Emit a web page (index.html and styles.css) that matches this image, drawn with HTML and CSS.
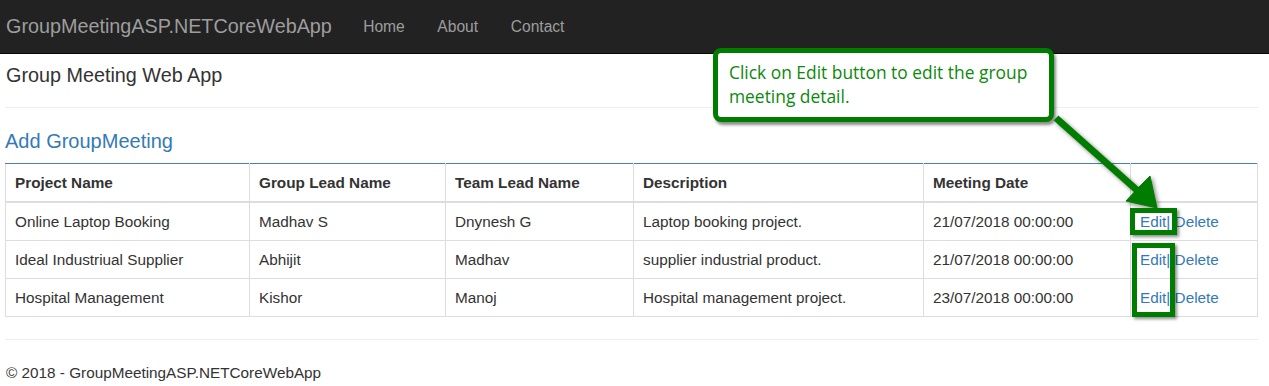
FILE: index.html
```html
<!DOCTYPE html>
<html>
<head>
<meta charset="utf-8">
<link rel="stylesheet" href="styles.css">
</head>
<body>
<nav class="navbar">
  <a class="brand">GroupMeetingASP.NETCoreWebApp</a>
  <ul class="nav">
    <li><a>Home</a></li>
    <li><a>About</a></li>
    <li><a>Contact</a></li>
  </ul>
</nav>
<main class="content">
  <div class="app-title">Group Meeting Web App</div>
  <hr class="rule">
  <h2 class="add-link">Add GroupMeeting</h2>
  <table class="grid">
    <thead>
      <tr>
        <th class="c1">Project Name</th>
        <th class="c2">Group Lead Name</th>
        <th class="c3">Team Lead Name</th>
        <th class="c4">Description</th>
        <th class="c5">Meeting Date</th>
        <th class="c6"></th>
      </tr>
    </thead>
    <tbody>
      <tr>
        <td>Online Laptop Booking</td>
        <td>Madhav S</td>
        <td>Dnynesh G</td>
        <td>Laptop booking project.</td>
        <td>21/07/2018 00:00:00</td>
        <td><a class="lnk">Edit|</a> <a class="lnk">Delete</a></td>
      </tr>
      <tr>
        <td>Ideal Industriual Supplier</td>
        <td>Abhijit</td>
        <td>Madhav</td>
        <td>supplier industrial product.</td>
        <td>21/07/2018 00:00:00</td>
        <td><a class="lnk">Edit|</a> <a class="lnk">Delete</a></td>
      </tr>
      <tr>
        <td>Hospital Management</td>
        <td>Kishor</td>
        <td>Manoj</td>
        <td>Hospital management project.</td>
        <td>23/07/2018 00:00:00</td>
        <td><a class="lnk">Edit|</a> <a class="lnk">Delete</a></td>
      </tr>
    </tbody>
  </table>
  <hr class="rule rule-bottom">
  <footer class="footer">© 2018 - GroupMeetingASP.NETCoreWebApp</footer>
</main>

<div class="callout">Click on Edit button to edit the group meeting detail.</div>
<svg class="arrow" width="130" height="120" viewBox="0 0 130 120">
  <g fill="#007d00" stroke="#007d00" style="filter: drop-shadow(2px 2px 2px rgba(0,0,0,.45))">
    <line x1="14" y1="12" x2="106" y2="94" stroke-width="7"/>
    <polygon points="96,82 108,70 115,102 84,95" stroke-width="1"/>
  </g>
</svg>
<div class="mark mark-1"></div>
<div class="mark mark-2"></div>
</body>
</html>
```

FILE: styles.css
```css
html, body {
  margin: 0;
  padding: 0;
}
body {
  position: relative;
  font-family: "Liberation Sans", Arial, Helvetica, sans-serif;
  font-size: 15.3px;
  line-height: 21px;
  color: #333;
  background: #fff;
  width: 1269px;
  height: 386px;
  overflow: hidden;
}
.navbar {
  display: flex;
  align-items: center;
  height: 53px;
  background: #222;
  border-bottom: 1px solid #080808;
}
.brand {
  padding-left: 6px;
  font-size: 19.8px;
  color: #9d9d9d;
  margin-right: 15px;
}
.nav {
  display: flex;
  list-style: none;
  margin: 0;
  padding: 0;
}
.nav a {
  display: block;
  padding: 0 16.3px;
  color: #9d9d9d;
  font-size: 15.6px;
}
.content {
  padding: 0 11px 0 5px;
}
.app-title {
  margin-top: 10px;
  font-size: 19.8px;
  line-height: 22px;
  padding-left: 1px;
}
.rule {
  margin: 21px 0 0;
  border: 0;
  border-top: 1px solid #eee;
  height: 0;
}
.add-link {
  margin: 22px 0 0;
  font-size: 20px;
  line-height: 22px;
  font-weight: normal;
  color: #337ab7;
}
.grid {
  margin-top: 11px;
  width: 100%;
  border-collapse: collapse;
  border: 1px solid #ddd;
}
.grid th, .grid td {
  border: 1px solid #ddd;
  padding: 8px 9px;
  text-align: left;
  vertical-align: top;
}
.grid th {
  font-weight: bold;
  border-top: 1px solid #4d7db3;
  border-bottom: 2px solid #ddd;
}
.c1 { width: 225px; }
.c2 { width: 177px; }
.c3 { width: 169px; }
.c4 { width: 271px; }
.c5 { width: 188px; }
.lnk {
  color: #337ab7;
}
.rule-bottom {
  margin-top: 22px;
}
.footer {
  margin-top: 22px;
  padding-left: 1px;
}
.callout {
  position: absolute;
  left: 713px;
  top: 48px;
  width: 309px;
  height: 50px;
  padding: 7px 11px 7px 11px;
  border: 5px solid #007d00;
  border-radius: 8px;
  background: #fff;
  box-shadow: 2px 3px 3px rgba(0, 0, 0, 0.45);
  font-family: "Open Sans", "Noto Sans", sans-serif;
  font-size: 17.4px;
  line-height: 24px;
  color: #0b8a0b;
}
.arrow {
  position: absolute;
  left: 1042px;
  top: 106px;
}
.mark {
  position: absolute;
  border: 5px solid #007d00;
  box-shadow: 2px 2px 3px rgba(0, 0, 0, 0.45);
}
.mark-1 {
  left: 1130px;
  top: 208px;
  width: 37px;
  height: 17px;
}
.mark-2 {
  left: 1132px;
  top: 243px;
  width: 33px;
  height: 64px;
}
```
